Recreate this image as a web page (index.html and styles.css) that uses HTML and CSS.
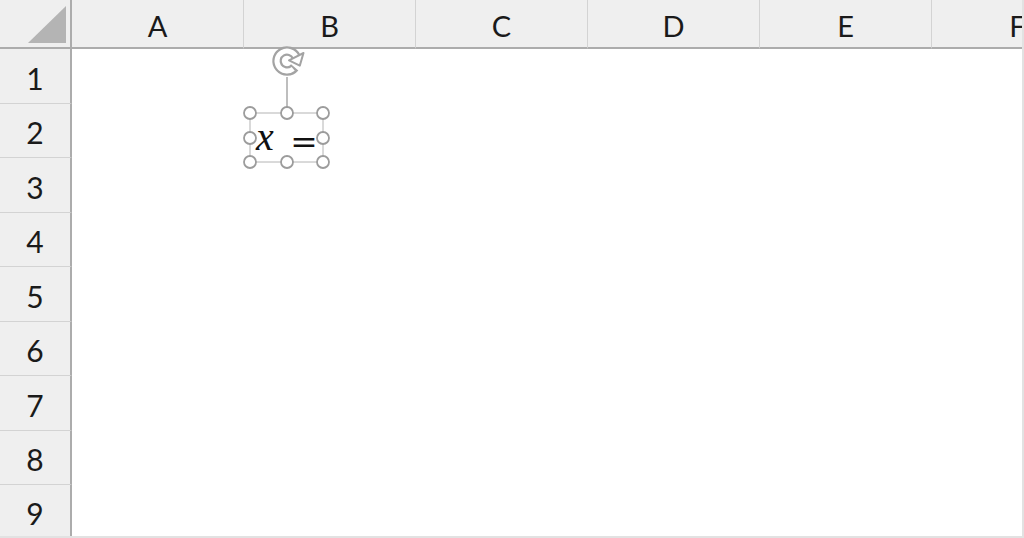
FILE: index.html
```html
<!DOCTYPE html>
<html>
<head>
<meta charset="utf-8">
<link rel="stylesheet" href="styles.css">
</head>
<body>
<div class="sheet">
  <div class="colheads">
    <div class="corner">
      <svg class="corner-tri" width="72" height="47" viewBox="0 0 72 47"><polygon points="66,6 66,43 28,43" fill="#b4b4b4"/></svg>
    </div>
    <div class="colhead">A</div>
    <div class="colhead">B</div>
    <div class="colhead">C</div>
    <div class="colhead">D</div>
    <div class="colhead">E</div>
    <div class="colhead">F</div>
  </div>
  <div class="body">
    <div class="rowheads">
      <div class="rowhead r55">1</div>
      <div class="rowhead r54">2</div>
      <div class="rowhead r55">3</div>
      <div class="rowhead r54">4</div>
      <div class="rowhead r55">5</div>
      <div class="rowhead r54">6</div>
      <div class="rowhead r55">7</div>
      <div class="rowhead r54">8</div>
      <div class="rowhead r54">9</div>
    </div>
    <div class="cells"></div>
  </div>
  <svg class="shape" width="1024" height="538" viewBox="0 0 1024 538">
    <g fill="none" stroke-linecap="butt">
      <path d="M294.7 67.4 A10 10 0 1 1 296.1 56.8" stroke="#a3a3a3" stroke-width="9.5"/>
      <path d="M293.2 68.9 A10 10 0 1 1 296.1 56.8" stroke="#ffffff" stroke-width="5"/>
    </g>
    <polygon points="303.5,53 289,60.3 299.8,65.6" fill="#fff" stroke="#a3a3a3" stroke-width="2" stroke-linejoin="round"/>
    <line x1="287" y1="77" x2="287" y2="107" stroke="#a8a8a8" stroke-width="1.5"/>
    <rect x="250" y="113" width="73" height="49" fill="none" stroke="#b4b4b4" stroke-width="1"/>
    <text class="eq-x" x="256" y="150">x</text>
    <text class="eq-sign" transform="translate(291.5 153.5) scale(1.3 1)" x="0" y="0">=</text>
    <g fill="#fff" stroke="#9c9c9c" stroke-width="1.8">
      <circle cx="250" cy="113" r="6"/>
      <circle cx="287" cy="113" r="6"/>
      <circle cx="323" cy="113" r="6"/>
      <circle cx="250" cy="138" r="6"/>
      <circle cx="323" cy="138" r="6"/>
      <circle cx="250" cy="162" r="6"/>
      <circle cx="287" cy="162" r="6"/>
      <circle cx="323" cy="162" r="6"/>
    </g>
  </svg>
</div>
</body>
</html>
```

FILE: styles.css
```css
html, body {
  margin: 0;
  padding: 0;
  background: #ffffff;
}

body {
  width: 1024px;
  height: 538px;
  overflow: hidden;
  font-family: Lato, "Open Sans", "Liberation Sans", sans-serif;
  color: #1a1a1a;
}

.sheet {
  position: relative;
  width: 1024px;
  height: 538px;
  overflow: hidden;
}

.sheet::after {
  content: "";
  position: absolute;
  left: 0;
  top: 0;
  right: 0;
  bottom: 0;
  border-right: 2px solid #e2e2e2;
  border-bottom: 2px solid #e2e2e2;
  pointer-events: none;
}

.colheads {
  display: grid;
  grid-template-columns: 72px repeat(6, 172px);
  height: 49px;
}

.corner {
  background: #efefef;
  border-right: 2px solid #acacac;
  border-bottom: 2px solid #acacac;
  box-sizing: border-box;
}

.corner-tri {
  display: block;
}

.colhead {
  background: #efefef;
  border-right: 1px solid #d3d3d3;
  border-bottom: 2px solid #acacac;
  box-sizing: border-box;
  display: flex;
  align-items: center;
  justify-content: center;
  font-size: 29px;
  padding-top: 4px;
}

.body {
  display: flex;
}

.rowheads {
  width: 72px;
  display: flex;
  flex-direction: column;
}

.rowhead {
  background: #efefef;
  border-right: 2px solid #acacac;
  border-bottom: 1px solid #d3d3d3;
  box-sizing: border-box;
  display: flex;
  align-items: center;
  justify-content: center;
  font-size: 30px;
  padding-top: 3px;
}

.r55 { height: 55px; }
.r54 { height: 54px; }

.cells {
  flex: 1;
  background: #ffffff;
}

.shape {
  position: absolute;
  left: 0;
  top: 0;
  pointer-events: none;
}

.eq-x {
  font-family: "Liberation Serif", "DejaVu Serif", serif;
  font-style: italic;
  font-size: 40px;
  fill: #111;
}

.eq-sign {
  font-family: "Liberation Serif", "DejaVu Serif", serif;
  font-weight: bold;
  font-size: 34px;
  fill: #111;
}
```
